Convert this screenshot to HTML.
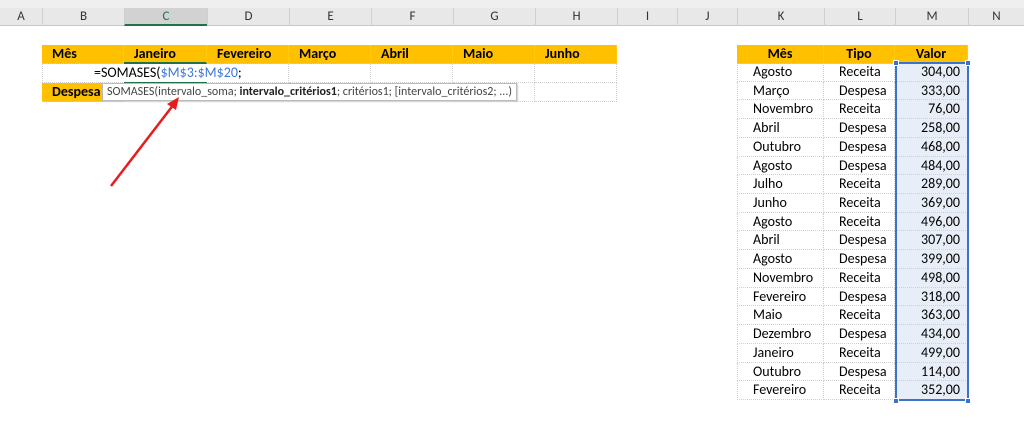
<!DOCTYPE html>
<html><head><meta charset="utf-8"><style>
body{margin:0;width:1024px;height:435px;background:#fff;position:relative;overflow:hidden;font-family:Calibri,"Liberation Sans",sans-serif;font-size:14px;color:#000}
.a{position:absolute;box-sizing:border-box}
.hd{top:0;height:26px;background:#e8e8e8;border-bottom:1px solid #c8c8c8}
.col{top:8px;height:18px;line-height:18px;text-align:center;color:#333;font-size:13px;border-left:1px solid #d0d0d0}
.c{height:19px;line-height:18px;border-right:1px dotted #cfcfcf;border-bottom:1px dotted #cfcfcf;white-space:nowrap;overflow:visible}
.y{background:#ffc000;font-weight:bold;padding-left:10px}
</style></head><body>
<div class="a hd" style="left:0;width:1024px"></div>
<div class="a" style="left:0;top:0;width:1024px;height:8px;background:#efefef"></div>
<div class="a col" style="left:0;width:42px;border-left:none">A</div>
<div class="a col" style="left:42px;width:82px">B</div>
<div class="a col" style="left:124px;width:83px;background:#d2d2d2;color:#217346;border-bottom:2px solid #217346">C</div>
<div class="a col" style="left:207px;width:82px">D</div>
<div class="a col" style="left:289px;width:82px">E</div>
<div class="a col" style="left:371px;width:82px">F</div>
<div class="a col" style="left:453px;width:82px">G</div>
<div class="a col" style="left:535px;width:82px">H</div>
<div class="a col" style="left:617px;width:60px">I</div>
<div class="a col" style="left:677px;width:60px">J</div>
<div class="a col" style="left:737px;width:87px">K</div>
<div class="a col" style="left:824px;width:71px">L</div>
<div class="a col" style="left:895px;width:73px">M</div>
<div class="a col" style="left:968px;width:56px">N</div>

<div class="a c y" style="left:42px;top:45px;width:82px">Mês</div>
<div class="a c y" style="left:124px;top:45px;width:83px;border-bottom:2px solid #217346">Janeiro</div>
<div class="a c y" style="left:207px;top:45px;width:82px">Fevereiro</div>
<div class="a c y" style="left:289px;top:45px;width:82px">Março</div>
<div class="a c y" style="left:371px;top:45px;width:82px">Abril</div>
<div class="a c y" style="left:453px;top:45px;width:82px">Maio</div>
<div class="a c y" style="left:535px;top:45px;width:82px">Junho</div>
<div class="a c" style="left:42px;top:64px;width:247px;border-left:1px dotted #cfcfcf"></div>
<div class="a c" style="left:289px;top:64px;width:82px"></div>
<div class="a c" style="left:371px;top:64px;width:82px"></div>
<div class="a c" style="left:453px;top:64px;width:82px"></div>
<div class="a c" style="left:535px;top:64px;width:82px"></div>
<div class="a" style="left:94px;top:64px;height:19px;line-height:18px;font-size:14px">=SOMASES(<span style="color:#3c78d8">$M$3:$M$20</span>;</div>
<div class="a c y" style="left:42px;top:83px;width:82px">Despesa</div>
<div class="a" style="left:124px;top:82px;width:83px;height:2px;background:#217346"></div>
<div class="a c" style="left:453px;top:83px;width:82px"></div>
<div class="a c" style="left:535px;top:83px;width:82px"></div>
<div class="a" style="left:102px;top:83px;width:415px;height:18px;line-height:16px;background:#fff;border:1px solid #bbb;box-shadow:1px 1px 1px #ccc;padding-left:4px;font-size:12px;color:#444;white-space:nowrap">SOMASES(intervalo_soma; <b style="color:#222">intervalo_critérios1</b>; critérios1; [intervalo_critérios2; ...)</div>

<svg class="a" style="left:0;top:0" width="1024" height="435">
<line x1="111" y1="186" x2="174" y2="104" stroke="#e81c1c" stroke-width="2.5"/>
<polygon points="179,97 167,104 176,110" fill="#e81c1c"/>
</svg>

<div id="rt"></div>
<script>
var d=[["Agosto","Receita","304,00"],["Março","Despesa","333,00"],["Novembro","Receita","76,00"],["Abril","Despesa","258,00"],["Outubro","Despesa","468,00"],["Agosto","Despesa","484,00"],["Julho","Receita","289,00"],["Junho","Receita","369,00"],["Agosto","Receita","496,00"],["Abril","Despesa","307,00"],["Agosto","Despesa","399,00"],["Novembro","Receita","498,00"],["Fevereiro","Despesa","318,00"],["Maio","Receita","363,00"],["Dezembro","Despesa","434,00"],["Janeiro","Receita","499,00"],["Outubro","Despesa","114,00"],["Fevereiro","Receita","352,00"]];
var h='<div class="a c y" style="left:737px;top:45px;width:87px;text-align:center;padding:0">Mês</div><div class="a c y" style="left:824px;top:45px;width:71px;text-align:center;padding:0">Tipo</div><div class="a c y" style="left:895px;top:45px;width:73px;text-align:center;padding:0">Valor</div>';
h+='<div class="a" style="left:896px;top:63px;width:72px;height:338px;background:#e8eef8"></div>';
for(var i=0;i<18;i++){var t=63+i*18.72;
h+='<div class="a c" style="left:737px;top:'+t+'px;width:87px;height:18.72px;padding-left:15px;border-left:1px dotted #cfcfcf">'+d[i][0]+'</div>';
h+='<div class="a c" style="left:824px;top:'+t+'px;width:71px;height:18.72px;padding-left:15px">'+d[i][1]+'</div>';
h+='<div class="a c" style="left:895px;top:'+t+'px;width:73px;height:18.72px;text-align:right;padding-right:7px">'+d[i][2]+'</div>';}
h+='<div class="a" style="left:895px;top:62px;width:74px;height:339px;border:2px solid #3a73c9"></div>';
[[893,60],[965,60],[893,398],[965,398]].forEach(function(p){h+='<div class="a" style="left:'+p[0]+'px;top:'+p[1]+'px;width:6px;height:6px;background:#3a73c9;border:1px solid #fff"></div>';});
document.getElementById('rt').innerHTML=h;
</script>
</body></html>
